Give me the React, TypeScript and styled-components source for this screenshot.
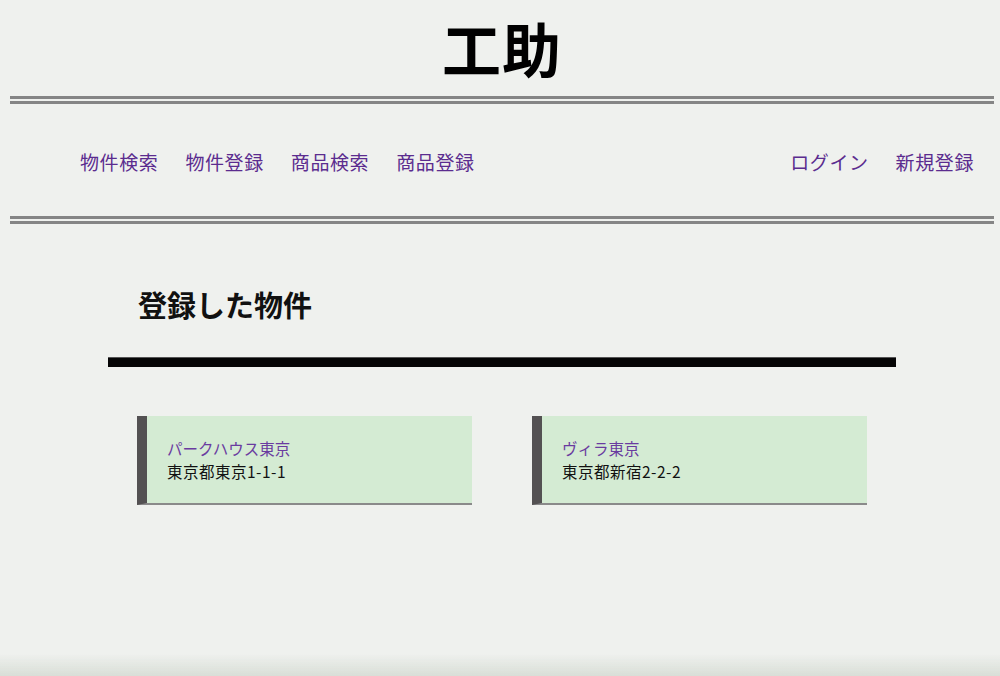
import { FC } from "react";
import styled, { createGlobalStyle } from "styled-components";

const GlobalStyle = createGlobalStyle`
  html, body {
    margin: 0;
    padding: 0;
    background: #eff1ee;
  }
  body {
    padding: 0 6px 0 10px;
    font-family: "Noto Sans CJK JP", "Noto Sans", sans-serif;
    color: #111;
    min-height: 676px;
    box-sizing: border-box;
  }
`;

const Title = styled.h1`
  margin: 0;
  height: 96px;
  display: flex;
  align-items: center;
  justify-content: center;
  font-size: 59px;
  font-weight: 700;
  letter-spacing: 1px;
  color: #000;
  padding-bottom: 2px;
  box-sizing: border-box;
`;

const DoubleRule = styled.div`
  border-top: 3px solid #858585;
  border-bottom: 3px solid #858585;
  box-sizing: border-box;
  height: 8px;
`;

const Nav = styled.nav`
  height: 112px;
  display: flex;
  align-items: center;
  justify-content: space-between;
  padding: 0 20px 0 70px;
  box-sizing: border-box;
`;

const NavGroup = styled.div`
  display: flex;
  gap: 27px;
`;

const NavLink = styled.a`
  font-size: 19px;
  letter-spacing: 0.6px;
  color: #5b2c8f;
  text-decoration: none;
  line-height: 1;
  padding-top: 3px;
`;

const Main = styled.main`
  width: 788px;
  margin: 0 auto;
`;

const SectionTitle = styled.h2`
  margin: 0;
  padding: 62px 0 0 30px;
  height: 133px;
  box-sizing: border-box;
  font-size: 29px;
  font-weight: 700;
  color: #111;
  line-height: 36px;
`;

const HeavyRule = styled.div`
  height: 10px;
  background: #050505;
  border-top: 1px solid #555;
  box-sizing: border-box;
`;

const CardGrid = styled.div`
  display: flex;
  justify-content: center;
  gap: 60px;
  margin-top: 49px;
`;

const Card = styled.div`
  width: 335px;
  height: 89px;
  box-sizing: border-box;
  background: #d4ebd3;
  border-left: 10px solid #535152;
  border-bottom: 2px solid #8a8a8a;
  padding: 22px 20px 0 20px;
  display: flex;
  flex-direction: column;
  gap: 3px;
`;

const CardName = styled.a`
  font-size: 15.5px;
  color: #6a3ba0;
  text-decoration: none;
  line-height: 20px;
`;

const CardAddress = styled.div`
  font-size: 15.5px;
  letter-spacing: 0.5px;
  color: #111;
  line-height: 20px;
`;

const BottomShade = styled.div`
  position: fixed;
  left: 0;
  right: 0;
  bottom: 0;
  height: 22px;
  background: linear-gradient(to bottom, rgba(220, 224, 218, 0), rgba(214, 220, 212, 0.9));
  pointer-events: none;
`;

const navLeft = ["物件検索", "物件登録", "商品検索", "商品登録"];
const navRight = ["ログイン", "新規登録"];

const properties = [
  { name: "パークハウス東京", address: "東京都東京1-1-1" },
  { name: "ヴィラ東京", address: "東京都新宿2-2-2" },
];

const App: FC = () => {
  return (
    <>
      <GlobalStyle />
      <header>
        <Title>工助</Title>
        <DoubleRule />
        <Nav>
          <NavGroup>
            {navLeft.map((label) => (
              <NavLink href="#" key={label}>
                {label}
              </NavLink>
            ))}
          </NavGroup>
          <NavGroup>
            {navRight.map((label) => (
              <NavLink href="#" key={label}>
                {label}
              </NavLink>
            ))}
          </NavGroup>
        </Nav>
        <DoubleRule />
      </header>
      <Main>
        <SectionTitle>登録した物件</SectionTitle>
        <HeavyRule />
        <CardGrid>
          {properties.map((p) => (
            <Card key={p.name}>
              <CardName href="#">{p.name}</CardName>
              <CardAddress>{p.address}</CardAddress>
            </Card>
          ))}
        </CardGrid>
      </Main>
      <BottomShade />
    </>
  );
};

export default App;
